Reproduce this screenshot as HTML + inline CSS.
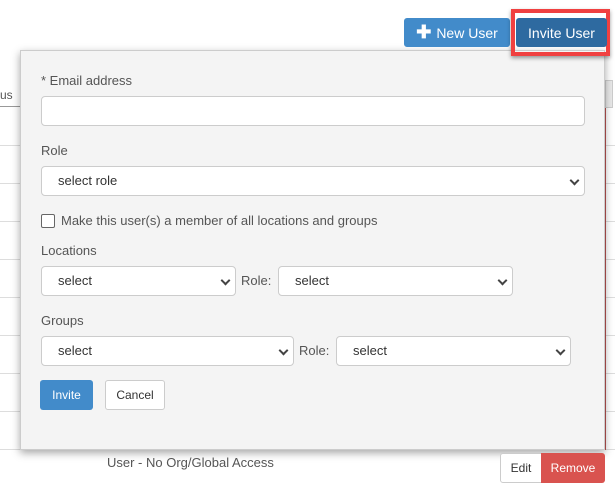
<!DOCTYPE html>
<html><head><style>
*{box-sizing:border-box}
body{margin:0;width:615px;height:494px;background:#fff;font-family:"Liberation Sans",sans-serif;color:#444;position:relative;overflow:hidden;font-size:13px}
.abs{position:absolute}
.line{position:absolute;left:0;width:615px;height:1px;background:#ddd}
.btn{position:absolute;border-radius:3px;color:#fff;font-size:14px;display:flex;align-items:center;justify-content:center}
.pop{position:absolute;left:20px;top:50px;width:585px;height:400px;background:#f4f4f4;border:1px solid #ccc;box-shadow:0 3px 8px rgba(0,0,0,.35)}
.lbl{position:absolute;font-size:13px;color:#555}
.inp{position:absolute;background:#fff;border:1px solid #ccc;border-radius:4px;height:30px;font-size:13px;color:#333;padding-left:16px;line-height:28px}
.chev{position:absolute;right:6px;top:10px;width:7px;height:7px;border-right:2px solid #444;border-bottom:2px solid #444;transform:rotate(45deg)}
</style></head><body>
<div class="abs" style="left:0;top:88px;font-size:12px;color:#555">us</div>
<div class="line" style="top:106px;background:#999;width:20px"></div>
<div class="line" style="top:145px"></div>
<div class="line" style="top:183px"></div>
<div class="line" style="top:221px"></div>
<div class="line" style="top:259px"></div>
<div class="line" style="top:297px"></div>
<div class="line" style="top:335px"></div>
<div class="line" style="top:373px"></div>
<div class="line" style="top:411px"></div>
<div class="line" style="top:449px"></div>
<div class="abs" style="left:605px;top:105px;width:1px;height:345px;background:#b85250"></div>
<div class="abs" style="left:605px;top:80px;width:8px;height:28px;background:#e8e8e8;border:1px solid #ccc"></div>

<div class="pop">
<div class="lbl" style="left:20px;top:22px">* Email address</div>
<div class="inp" style="left:20px;top:45px;width:544px"></div>
<div class="lbl" style="left:20px;top:92px">Role</div>
<div class="inp" style="left:20px;top:115px;width:544px">select role<div class="chev"></div></div>
<div class="abs" style="left:20px;top:163px;width:14px;height:14px;border:1px solid #666;border-radius:2px;background:#fff"></div>
<div class="lbl" style="left:40px;top:162px">Make this user(s) a member of all locations and groups</div>
<div class="lbl" style="left:20px;top:192px">Locations</div>
<div class="inp" style="left:20px;top:215px;width:195px">select<div class="chev"></div></div>
<div class="lbl" style="left:220px;top:222px">Role:</div>
<div class="inp" style="left:257px;top:215px;width:235px">select<div class="chev"></div></div>
<div class="lbl" style="left:20px;top:262px">Groups</div>
<div class="inp" style="left:20px;top:285px;width:253px">select<div class="chev"></div></div>
<div class="lbl" style="left:278px;top:292px">Role:</div>
<div class="inp" style="left:315px;top:285px;width:235px">select<div class="chev"></div></div>
<div class="btn" style="left:19px;top:329px;width:53px;height:30px;background:#428bca;font-size:12px">Invite</div>
<div class="btn" style="left:84px;top:329px;width:60px;height:30px;background:#fff;border:1px solid #ccc;color:#333;font-size:12px">Cancel</div>
</div>

<div class="btn" style="left:404px;top:18px;width:106px;height:29px;background:#428bca"><span style="font-weight:bold;font-size:18px;margin-right:5px">✚</span>New User</div>
<div class="abs" style="left:511px;top:9px;width:99px;height:47px;border:4px solid #f04040;box-shadow:0 2px 4px rgba(0,0,0,.4)"></div>
<div class="btn" style="left:516px;top:18px;width:91px;height:29px;background:#2e6aa0">Invite User</div>

<div class="abs" style="left:107px;top:455px;font-size:13px;color:#555">User - No Org/Global Access</div>
<div class="btn" style="left:500px;top:453px;width:42px;height:30px;background:#fff;border:1px solid #ccc;color:#333;font-size:12px;border-radius:3px 0 0 3px">Edit</div>
<div class="btn" style="left:541px;top:453px;width:64px;height:30px;background:#d9534f;font-size:12px;border-radius:0 3px 3px 0">Remove</div>
</body></html>
